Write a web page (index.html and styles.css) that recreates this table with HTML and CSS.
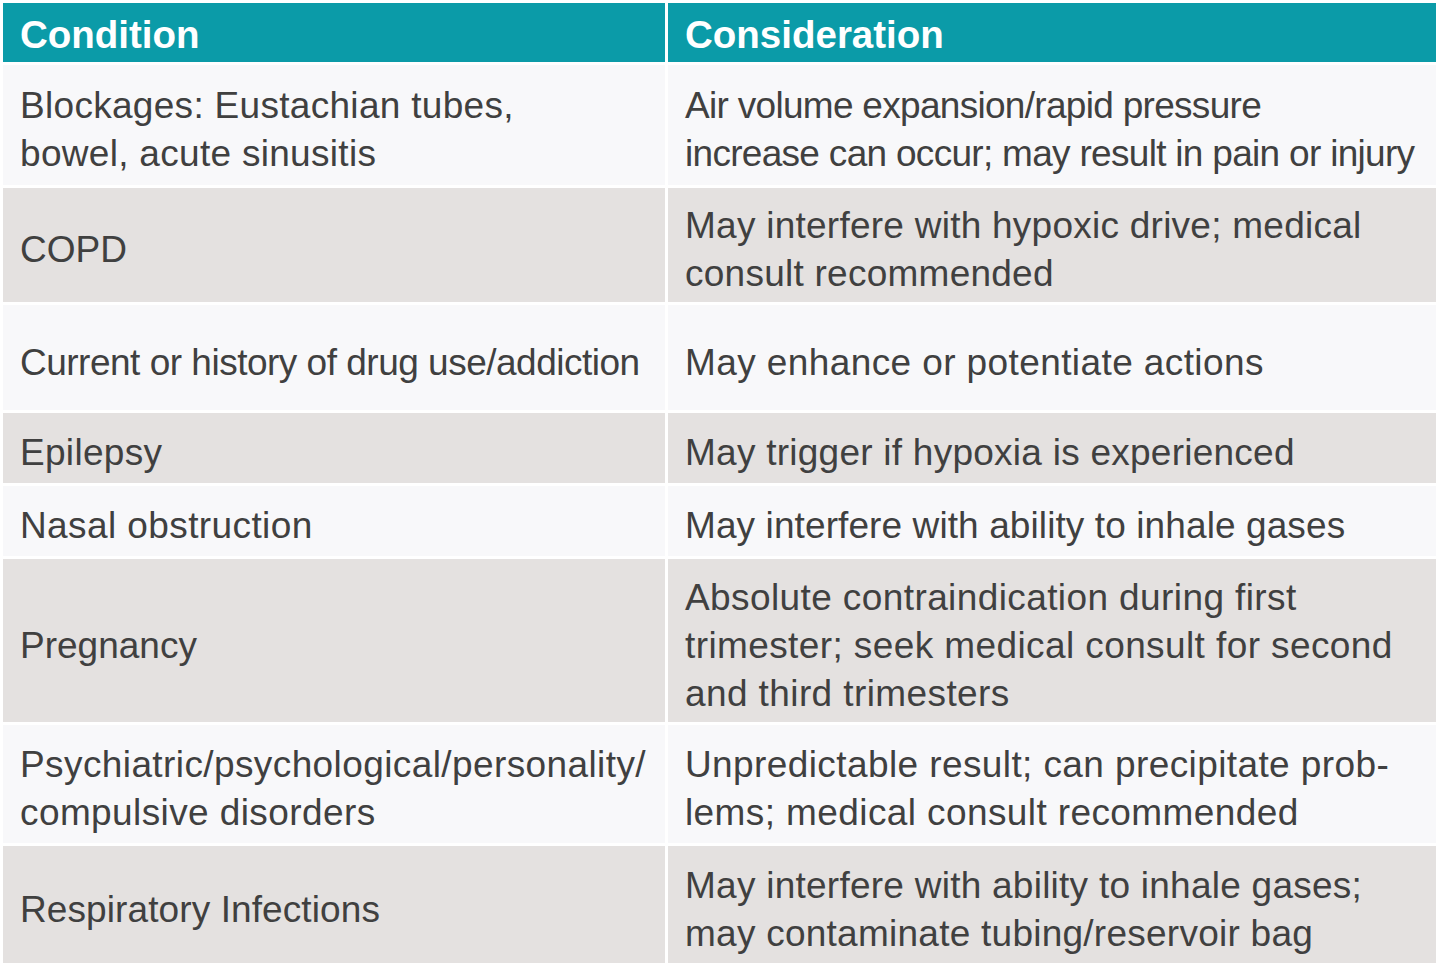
FILE: index.html
```html
<!DOCTYPE html>
<html lang="en">
<head>
<meta charset="utf-8">
<title>Conditions and Considerations</title>
<link rel="stylesheet" href="styles.css">
</head>
<body>
<div class="table">
  <div class="cell head">Condition</div>
  <div class="cell head">Consideration</div>

  <div class="cell light ls-p3">Blockages: Eustachian tubes,<br>bowel, acute sinusitis</div>
  <div class="cell light ls-n7">Air volume expansion/rapid pressure<br>increase can occur; may result in pain or injury</div>

  <div class="cell dark">COPD</div>
  <div class="cell dark ls-p2">May interfere with hypoxic drive; medical<br>consult recommended</div>

  <div class="cell light ls-n5">Current or history of drug use/addiction</div>
  <div class="cell light ls-p4">May enhance or potentiate actions</div>

  <div class="cell dark ls-p3">Epilepsy</div>
  <div class="cell dark ls-p2">May trigger if hypoxia is experienced</div>

  <div class="cell light ls-p4">Nasal obstruction</div>
  <div class="cell light ls-p1">May interfere with ability to inhale gases</div>

  <div class="cell dark">Pregnancy</div>
  <div class="cell dark ls-p4">Absolute contraindication during first<br>trimester; seek medical consult for second<br>and third trimesters</div>

  <div class="cell light ls-p4">Psychiatric/psychological/personality/<br>compulsive disorders</div>
  <div class="cell light ls-p4">Unpredictable result; can precipitate prob-<br>lems; medical consult recommended</div>

  <div class="cell dark ls-p1">Respiratory Infections</div>
  <div class="cell dark ls-p2">May interfere with ability to inhale gases;<br>may contaminate tubing/reservoir bag</div>
</div>
</body>
</html>
```

FILE: styles.css
```css
html, body {
  margin: 0;
  padding: 0;
  background: #ffffff;
}

body {
  font-family: "Liberation Sans", Arial, Helvetica, sans-serif;
  color: #404040;
}

.table {
  display: grid;
  grid-template-columns: 662px 768px;
  grid-template-rows: 59px 120px 114px 105px 70px 70px 163px 118px 117px;
  column-gap: 3px;
  row-gap: 3px;
  margin: 3px 0 0 3px;
}

.cell {
  display: flex;
  align-items: center;
  padding: 10px 0 0 17px;
  font-size: 37px;
  line-height: 48px;
  letter-spacing: 0;
  white-space: nowrap;
}

.ls-n7 { letter-spacing: -0.7px; }
.ls-n5 { letter-spacing: -0.5px; }
.ls-p1 { letter-spacing: 0.1px; }
.ls-p2 { letter-spacing: 0.25px; }
.ls-p3 { letter-spacing: 0.3px; }
.ls-p4 { letter-spacing: 0.4px; }

.head {
  background: #0b9ba8;
  color: #ffffff;
  font-weight: bold;
  font-size: 38.5px;
  letter-spacing: 0;
  padding-top: 4px;
}

.light {
  background: #f8f8fa;
}

.dark {
  background: #e4e1e0;
}
```
